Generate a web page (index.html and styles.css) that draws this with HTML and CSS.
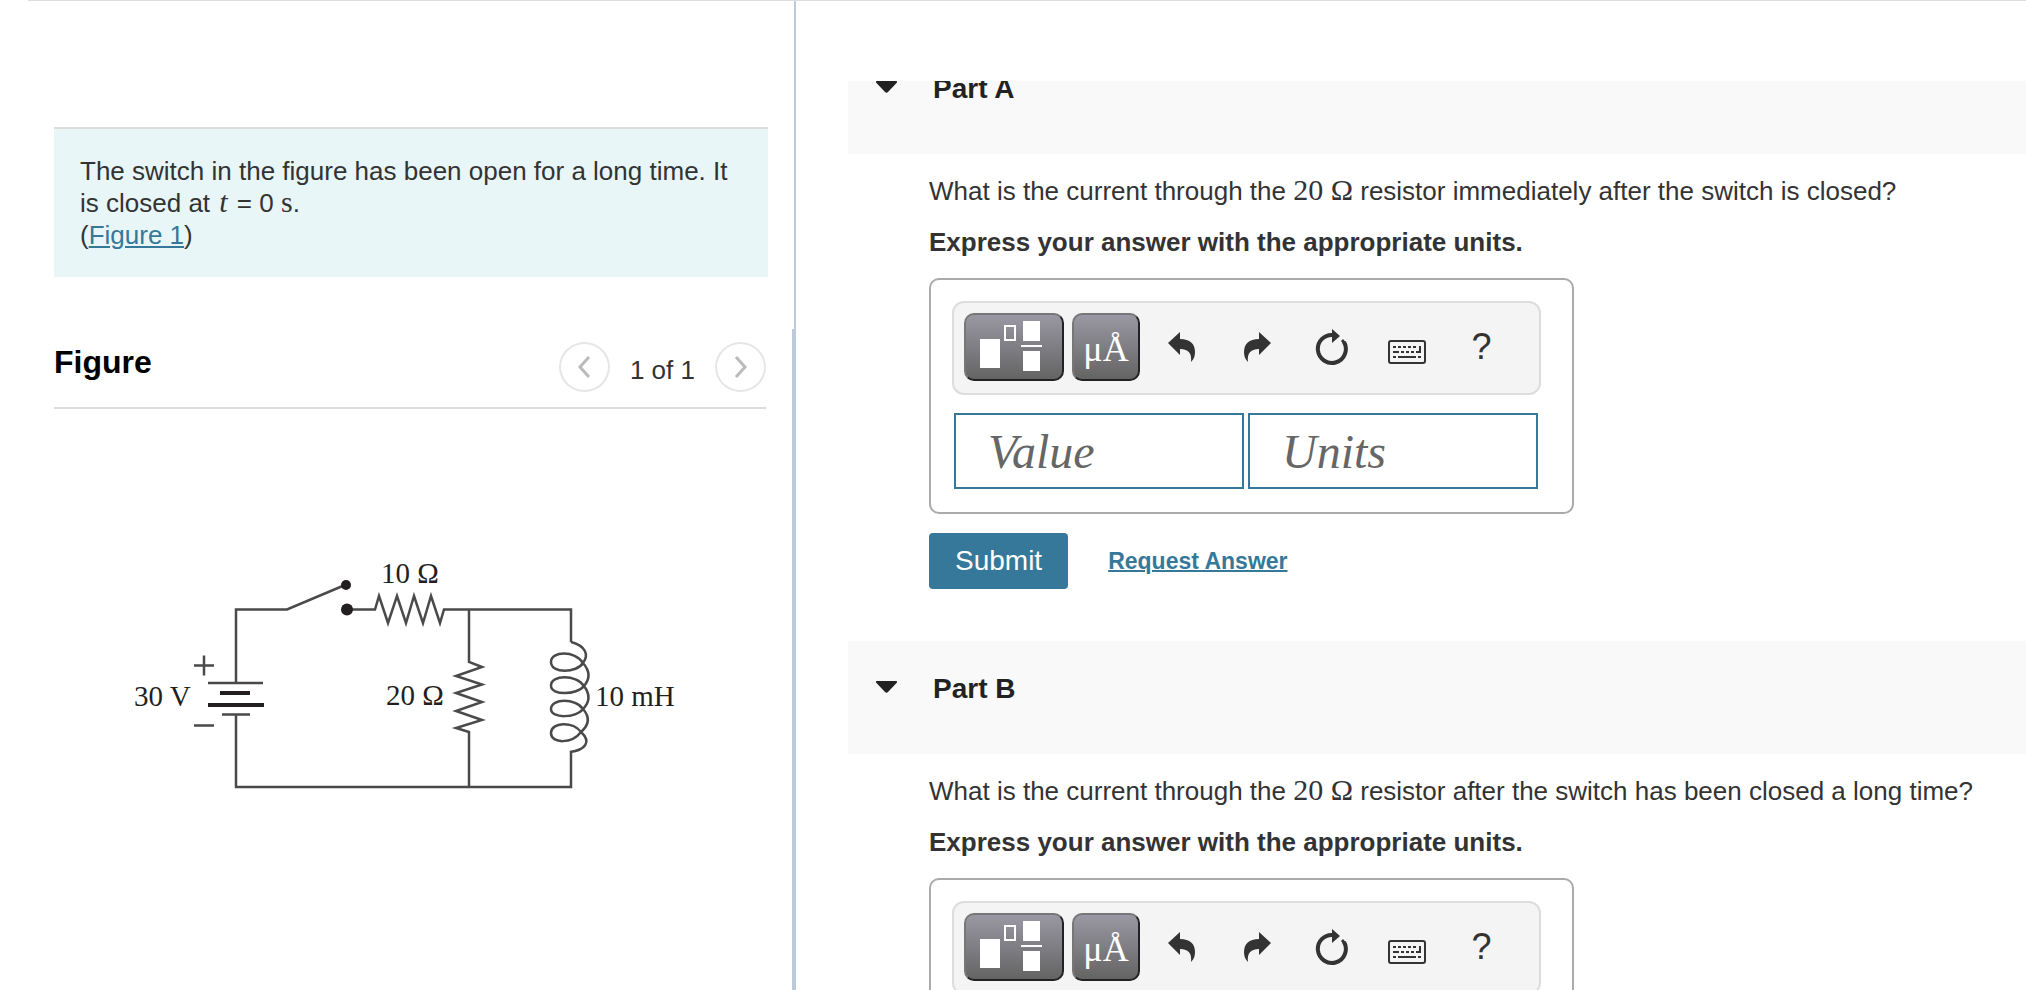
FILE: index.html
```html
<!DOCTYPE html>
<html lang="en">

<head>
	<meta charset="utf-8">
	<title>Switch and inductor circuit</title>
	<meta name="viewport" content="width=device-width, initial-scale=1">
	<link rel="stylesheet" href="styles.css">
</head>

<body>
	<svg class="sprite" aria-hidden="true">
		<symbol id="icon-templates" viewBox="0 0 96 64">
			<path fill="#fff" d="M14 24h20v29H14zM57 6h17v20H57zM57 36h17v20H57zM55 30h21v2H55z" />
			<path fill="none" stroke="#fff" stroke-width="2" d="M39 11h10v14H39z" />
		</symbol>
		<symbol id="icon-undo" viewBox="0 0 28 32">
			<path d="M0 12 12 1v7c10 0 15 5 15 13 0 4-1 7-4 10 1-8-2-13-11-13v6z" />
		</symbol>
		<symbol id="icon-redo" viewBox="0 0 28 32">
			<path d="M28 12 16 1v7C6 8 1 13 1 21c0 4 1 7 4 10-1-8 2-13 11-13v6z" />
		</symbol>
		<symbol id="icon-reset" viewBox="0 0 34 38">
			<path fill="none" stroke="currentColor" stroke-width="4" d="M18 7A14 14 0 1 0 29 14" />
			<path d="M17 1 25 8 17 15zM26 13l2-2 4 5-3 1z" />
		</symbol>
		<symbol id="icon-keyboard" viewBox="0 0 38 24">
			<rect x="1" y="1" width="36" height="22" rx="2" fill="none" stroke="currentColor" stroke-width="2" />
			<path d="M5 6h3v2H5zm5 0h3v2h-3zm5 0h3v2h-3zm5 0h3v2h-3zm5 0h3v2h-3zM5 11h6v2H5zm8 0h3v2h-3zm5 0h3v2h-3zm5 0h3v2h-3zM31 6h2v7h-5v-2h3zM5 16h3v2H5zm5 0h18v2H10zm20 0h3v2h-3z" />
		</symbol>
		<symbol id="icon-caret" viewBox="0 0 21 12">
			<path d="M1 0h19q2 0 .5 2L12 11q-1.500 1.500-3 0L.5 2Q-1 0 1 0z" />
		</symbol>
	</svg>

	<div class="layout">
		<aside class="sidebar">
			<section class="problem">
				<p class="intro">
					The switch in the figure has been open for a long time. It is closed at
					<i class="math">t</i> = 0 <span class="math">s</span>.<br>
					(<a href="#figure">Figure 1</a>)
				</p>
			</section>
			<section class="figure" id="figure">
				<header class="figure-header">
					<h2>Figure</h2>
					<nav class="pager" aria-label="Figures">
						<button type="button" aria-label="Previous figure">
							<svg width="14" height="24" viewBox="0 0 14 24"><path d="M12 2 3 12l9 10" /></svg>
						</button>
						<span>1 of 1</span>
						<button type="button" aria-label="Next figure">
							<svg width="14" height="24" viewBox="0 0 14 24"><path d="m2 2 9 10-9 10" /></svg>
						</button>
					</nav>
				</header>
				<svg class="circuit" width="560" height="250" viewBox="120 550 560 250" role="img" aria-label="Circuit diagram">
					<g class="wire">
						<!-- battery side and switch -->
						<path d="M236 683V609.500H287L345 585" />
						<path d="M236 715V787H571V751" />
						<path d="M208 683H263M222 714.500H250" />
						<path class="thick" d="M220 693H250M208 705H264" />
						<!-- series resistor -->
						<path d="M347 609.500H375L379 596 388 623 397 596 406 623 414 596 423 623 431 596 440 623 444 609.500H571V642" />
						<!-- parallel resistor -->
						<path d="M469 609V662L482 667 456 676 482 684.500 456 693 482 702 456 711 482 720 456 728 469 732V787" />
						<!-- inductor -->
						<path d="M571 642C586 646 589 655 583 663C577 673 551 674 551 662C551 651 575 650 583 663C590 671 590 679 584 686C577 695 551 696 551 685.500C551 675 576 674 584 686C590 694 590 702 583 709C576 718 551 719 551 709C551 698 576 698 583 709C590 717 589 725 581 732C572 744 551 744 551 733C551 722 573 721 581 732C592 742 585 750 570 752" />
						<!-- polarity marks -->
						<path d="M194 665.500H214M204 655.500V675.500M194 725.500H214" />
					</g>
					<circle cx="346" cy="585" r="5" />
					<circle cx="347" cy="609.500" r="6" />
					<text x="134" y="706">30 V</text>
					<text x="381" y="583">10 Ω</text>
					<text x="386" y="705">20 Ω</text>
					<text x="595" y="706">10 mH</text>
				</svg>
			</section>
		</aside>

		<main class="parts">
			<section class="part">
				<header class="part-header">
					<button type="button" aria-label="Collapse Part A"><svg width="21" height="12"><use href="#icon-caret" /></svg></button>
					<h2>Part A</h2>
				</header>
				<form class="part-body">
					<p>What is the current through the <span class="math">20 Ω</span> resistor immediately after the switch is closed?</p>
					<p><b>Express your answer with the appropriate units.</b></p>
					<div class="answer">
						<div class="toolbar">
							<button type="button" class="key key-wide" aria-label="Templates"><svg width="96" height="64"><use href="#icon-templates" /></svg></button>
							<button type="button" class="key" aria-label="Symbols">μÅ</button>
							<div class="tools">
								<button type="button" aria-label="Undo"><svg width="28" height="32"><use href="#icon-undo" /></svg></button>
								<button type="button" aria-label="Redo"><svg width="28" height="32"><use href="#icon-redo" /></svg></button>
								<button type="button" aria-label="Reset"><svg width="34" height="38"><use href="#icon-reset" /></svg></button>
								<button type="button" class="keyboard" aria-label="Keyboard shortcuts"><svg width="38" height="24"><use href="#icon-keyboard" /></svg></button>
								<button type="button" aria-label="Help">?</button>
							</div>
						</div>
						<div class="fields">
							<input type="text" placeholder="Value" aria-label="Value">
							<input type="text" placeholder="Units" aria-label="Units">
						</div>
					</div>
					<div class="actions">
						<button type="submit">Submit</button>
						<a href="#answer-a">Request Answer</a>
					</div>
				</form>
			</section>

			<section class="part">
				<header class="part-header">
					<button type="button" aria-label="Collapse Part B"><svg width="21" height="12"><use href="#icon-caret" /></svg></button>
					<h2>Part B</h2>
				</header>
				<form class="part-body">
					<p>What is the current through the <span class="math">20 Ω</span> resistor after the switch has been closed a long time?</p>
					<p><b>Express your answer with the appropriate units.</b></p>
					<div class="answer">
						<div class="toolbar">
							<button type="button" class="key key-wide" aria-label="Templates"><svg width="96" height="64"><use href="#icon-templates" /></svg></button>
							<button type="button" class="key" aria-label="Symbols">μÅ</button>
							<div class="tools">
								<button type="button" aria-label="Undo"><svg width="28" height="32"><use href="#icon-undo" /></svg></button>
								<button type="button" aria-label="Redo"><svg width="28" height="32"><use href="#icon-redo" /></svg></button>
								<button type="button" aria-label="Reset"><svg width="34" height="38"><use href="#icon-reset" /></svg></button>
								<button type="button" class="keyboard" aria-label="Keyboard shortcuts"><svg width="38" height="24"><use href="#icon-keyboard" /></svg></button>
								<button type="button" aria-label="Help">?</button>
							</div>
						</div>
						<div class="fields">
							<input type="text" placeholder="Value" aria-label="Value">
							<input type="text" placeholder="Units" aria-label="Units">
						</div>
					</div>
				</form>
			</section>
		</main>
	</div>
</body>

</html>
```

FILE: styles.css
```css
*,
*::before,
*::after {
	box-sizing: border-box;
}

:root {
	--accent: #367899;
	--text: #333;
	--rule: #DDD;
	--divider: #BCCADC;
	--serif: "Liberation Serif", "Times New Roman", serif;
}

body {
	height: 100vh;
	margin: 0;
	overflow: hidden;
	display: flex;
	flex-direction: column;
	color: var(--text);
	font: 26px/32px "Liberation Sans", Helvetica, Arial, sans-serif;

	&::before {
		content: "";
		flex: none;
		height: 1px;
		margin-left: 28px;
		background-color: var(--rule);
	}
}

h2,
p {
	margin: 0;
}

a {
	color: var(--accent);
}

button {
	border: none;
	padding: 0;
	background-color: transparent;
	color: inherit;
	font: inherit;
	cursor: pointer;
}

svg {
	display: block;
	fill: currentColor;
}

.sprite {
	position: absolute;
	width: 0;
	height: 0;
}

.math {
	font-family: var(--serif);
	font-size: 30px;
	line-height: 30px;
}

.layout {
	flex: 1;
	min-height: 0;
	display: grid;
	grid-template-columns: 398fr 615fr;
}

.sidebar {
	display: flex;
	flex-direction: column;
	min-height: 0;
}

.problem {
	border-right: 2px solid var(--divider);
	padding: 126px 26px 52px 54px;
}

.intro {
	border-top: 2px solid var(--rule);
	padding: 26px;
	min-height: 150px;
	background-color: #E8F6F7;

	i.math {
		padding-inline: 2px;
	}
}

.figure {
	flex: 1;
	border-right: 4px solid var(--divider);
	padding: 13px 26px 0 54px;
}

.figure-header {
	display: flex;
	justify-content: space-between;
	align-items: flex-start;
	height: 67px;
	border-bottom: 2px solid var(--rule);

	h2 {
		padding-top: 4px;
		color: #000;
		font-size: 32px;
		line-height: 32px;
	}
}

.pager {
	display: flex;
	align-items: center;
	gap: 20px;

	span {
		padding-top: 6px;
	}

	button {
		display: grid;
		place-items: center;
		width: 51px;
		height: 50px;
		border: 2px solid #E6E6E6;
		border-radius: 50%;
	}

	svg {
		fill: none;
		stroke: #BBB;
		stroke-width: 3;
	}
}

.circuit {
	max-width: 100%;
	margin: 141px 0 0 66px;
	fill: #231F20;
	font: 29px var(--serif);

	.wire {
		fill: none;
		stroke: #4A4A4A;
		stroke-width: 2.5;
	}

	.thick {
		stroke: #231F20;
		stroke-width: 4;
	}
}

.parts {
	min-height: 0;
	margin: 80px 0 0 52px;
	overflow: hidden;

	/* scrolled part-way into the first header */
	.part:first-child {
		margin-top: -40px;
	}
}

.part-header {
	display: flex;
	align-items: flex-start;
	gap: 36px;
	height: 113px;
	padding: 32px 28px;
	background-color: #F9F9F9;
	color: #222;

	h2 {
		font-size: 28px;
		line-height: 32px;
	}

	button {
		padding-top: 8px;
	}
}

.part-body {
	display: flex;
	flex-direction: column;
	align-items: flex-start;
	padding: 21px 20px 52px 81px;

	p + p {
		margin-top: 19px;
	}
}

.answer {
	width: 645px;
	max-width: 100%;
	margin-top: 20px;
	border: 2px solid #AAA;
	border-radius: 10px;
	padding: 21px 31px 23px 21px;
}

.toolbar {
	display: flex;
	gap: 4px;
	border: 2px solid var(--rule);
	border-radius: 12px;
	padding: 10px 10px 12px;
	background-color: #F4F4F4;
}

.key {
	display: grid;
	place-items: center;
	width: 68px;
	height: 68px;
	border: 2px solid;
	border-color: #777 #222 #222 #777;
	border-radius: 10px;
	background: linear-gradient(#9A98A3, #646464);
	color: #FFF;
	font: 36px/36px var(--serif);

	&:not(.key-wide) {
		padding-top: 4px;
	}
}

.key-wide {
	width: 100px;
	margin-right: 4px;
}

.tools {
	display: flex;

	button {
		display: grid;
		place-items: center;
		width: 75px;
		height: 68px;
		font-size: 36px;
	}

	.keyboard {
		padding-top: 10px;
	}
}

.fields {
	display: flex;
	gap: 4px;
	margin-top: 18px;
	padding: 0 3px 0 2px;

	input {
		flex: 1;
		min-width: 0;
		height: 76px;
		border: 2px solid var(--accent);
		padding: 0 32px;
		background-color: #FFF;
		color: var(--text);
		font: italic 48px var(--serif);

		&::placeholder {
			color: #666;
		}
	}
}

.actions {
	display: flex;
	align-items: center;
	gap: 40px;
	margin-top: 19px;

	button {
		height: 56px;
		border-radius: 4px;
		padding: 0 26px;
		background-color: var(--accent);
		color: #FFF;
		font-size: 28px;
	}

	a {
		font-size: 23px;
		font-weight: bold;
		text-decoration-thickness: 2px;
	}
}
```
